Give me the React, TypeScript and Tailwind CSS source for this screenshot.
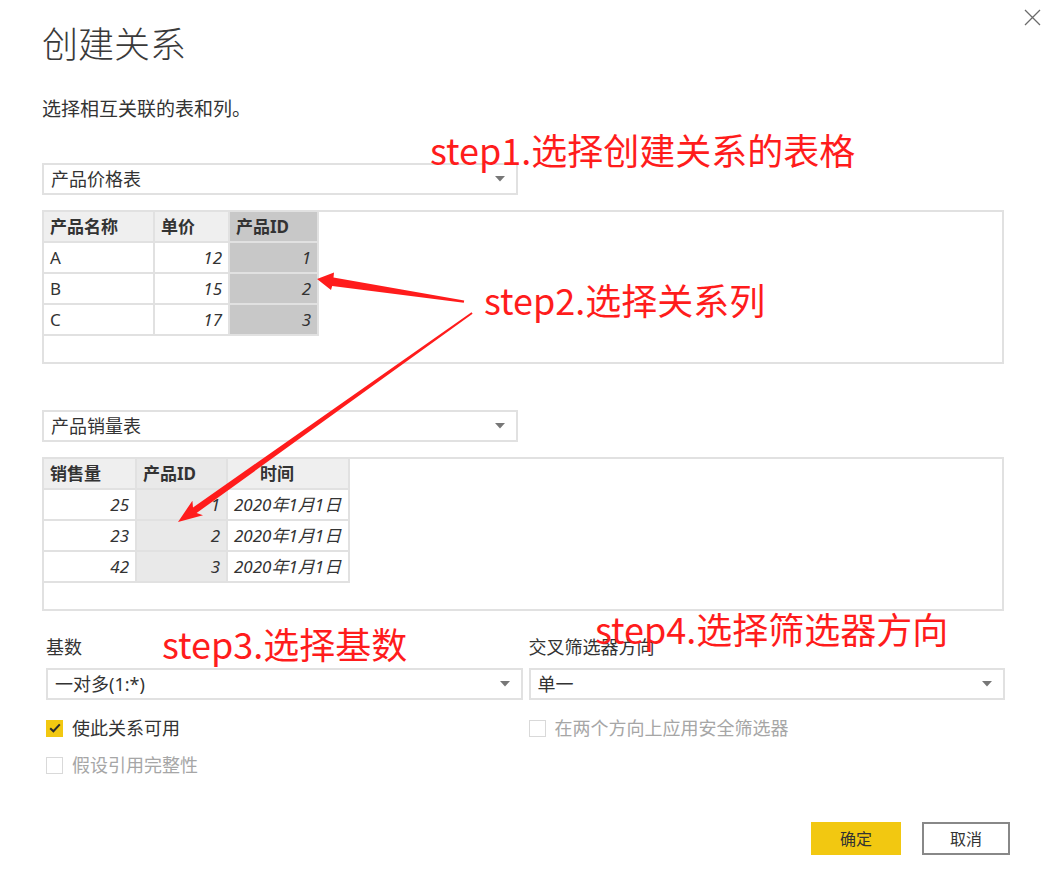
import React from 'react';

type Cell = { text: string; align?: 'left' | 'right'; italic?: boolean };

interface TableSpec {
  widths: number[];
  headers: string[];
  headerPad?: number[];
  selected: number;
  selectedBg: string;
  rows: Cell[][];
}

const priceTable: TableSpec = {
  widths: [111, 75, 89],
  headers: ['产品名称', '单价', '产品ID'],
  selected: 2,
  selectedBg: 'bg-[#c8c8c8]',
  rows: [
    [{ text: 'A' }, { text: '12', align: 'right', italic: true }, { text: '1', align: 'right', italic: true }],
    [{ text: 'B' }, { text: '15', align: 'right', italic: true }, { text: '2', align: 'right', italic: true }],
    [{ text: 'C' }, { text: '17', align: 'right', italic: true }, { text: '3', align: 'right', italic: true }],
  ],
};

const salesTable: TableSpec = {
  widths: [93, 91, 122],
  headers: ['销售量', '产品ID', '时间'],
  headerPad: [6, 6, 32],
  selected: 1,
  selectedBg: 'bg-[#e9e9e9]',
  rows: [
    [{ text: '25', align: 'right', italic: true }, { text: '1', align: 'right', italic: true }, { text: '2020年1月1日', italic: true }],
    [{ text: '23', align: 'right', italic: true }, { text: '2', align: 'right', italic: true }, { text: '2020年1月1日', italic: true }],
    [{ text: '42', align: 'right', italic: true }, { text: '3', align: 'right', italic: true }, { text: '2020年1月1日', italic: true }],
  ],
};

const Caret = () => (
  <svg width="10" height="6" viewBox="0 0 10 6" className="shrink-0">
    <path d="M0 0 L10 0 L5 5.5 Z" fill="#777" />
  </svg>
);

const Select = ({ value, className = '' }: { value: string; className?: string }) => (
  <div
    className={`h-[32px] border-2 border-[#e1e1e1] flex items-center justify-between pl-[7px] pr-[11px] text-[18px] leading-none ${className}`}
  >
    <span>{value}</span>
    <Caret />
  </div>
);

const DataTable = ({ spec }: { spec: TableSpec }) => (
  <div className="h-[154px] border-2 border-[#e1e1e1]">
    <div className="flex">
      {spec.headers.map((h, i) => (
        <div
          key={h}
          style={{ width: spec.widths[i], paddingLeft: spec.headerPad ? spec.headerPad[i] : 6 }}
          className={`h-[31px] flex items-center border-r-2 border-b-2 border-[#e1e1e1] text-[17px] font-bold ${
            i === spec.selected ? spec.selectedBg : 'bg-[#efefef]'
          }`}
        >
          {h}
        </div>
      ))}
    </div>
    {spec.rows.map((row, r) => (
      <div key={r} className="flex">
        {row.map((c, i) => (
          <div
            key={i}
            style={{ width: spec.widths[i] }}
            className={`h-[31px] flex items-center border-r-2 border-b-2 border-[#e1e1e1] text-[17px] px-[6px] ${
              c.align === 'right' ? 'justify-end' : 'justify-start'
            } ${c.italic ? 'italic' : ''} ${i === spec.selected ? spec.selectedBg : 'bg-white'}`}
          >
            {c.text}
          </div>
        ))}
      </div>
    ))}
  </div>
);

const Check = ({ checked, label, disabled }: { checked?: boolean; label: string; disabled?: boolean }) => (
  <div className="flex items-center gap-[9px] h-[24px]">
    {checked ? (
      <div className="w-[17px] h-[17px] bg-[#f2c811] flex items-center justify-center">
        <svg width="12" height="10" viewBox="0 0 12 10">
          <path d="M1.2 5.2 L4.4 8.3 L10.8 1.4" fill="none" stroke="#2b2b2b" strokeWidth="2" />
        </svg>
      </div>
    ) : (
      <div className="w-[17px] h-[17px] border border-[#d9d9d9] bg-white" />
    )}
    <span className={`text-[18px] leading-none ${disabled ? 'text-[#a6a6a6]' : ''}`}>{label}</span>
  </div>
);

export default function App() {
  return (
    <div className="relative w-[1052px] h-[896px] bg-white text-[#333] overflow-hidden font-['Noto_Sans','Noto_Sans_CJK_SC',sans-serif]">
      {/* close */}
      <button className="absolute right-[11px] top-[9px] w-[17px] h-[17px]">
        <svg width="17" height="17" viewBox="0 0 17 17">
          <path d="M1 1 L16 16 M16 1 L1 16" stroke="#6b6b6b" strokeWidth="1.3" />
        </svg>
      </button>

      <div className="pl-[42px] pr-[48px]">
        <h1 className="pt-[25px] text-[36px] leading-[40px] font-light text-[#3a3a3a]">创建关系</h1>
        <p className="mt-[32px] text-[19px] leading-[24px]">选择相互关联的表和列。</p>

        <Select value="产品价格表" className="mt-[42px] w-[476px]" />
        <div className="mt-[15px]">
          <DataTable spec={priceTable} />
        </div>

        <Select value="产品销量表" className="mt-[46px] w-[476px]" />
        <div className="mt-[15px]">
          <DataTable spec={salesTable} />
        </div>
      </div>

      <div className="pl-[46px] pr-[47px] grid grid-cols-2 gap-x-[6px] mt-[24px]">
        <div className="flex flex-col">
          <div className="text-[18px] leading-[24px]">基数</div>
          <Select value="一对多(1:*)" className="mt-[9px]" />
          <div className="mt-[16px]">
            <Check checked label="使此关系可用" />
          </div>
          <div className="mt-[13px]">
            <Check disabled label="假设引用完整性" />
          </div>
        </div>
        <div className="flex flex-col">
          <div className="text-[18px] leading-[24px]">交叉筛选器方向</div>
          <Select value="单一" className="mt-[9px]" />
          <div className="mt-[16px]">
            <Check disabled label="在两个方向上应用安全筛选器" />
          </div>
        </div>
      </div>

      <div className="flex justify-end gap-[21px] pr-[42px] mt-[45px]">
        <button className="w-[90px] h-[33px] bg-[#f2c811] text-[16px] text-[#333]">确定</button>
        <button className="w-[88px] h-[33px] border-2 border-[#888] bg-white text-[16px] text-[#333]">取消</button>
      </div>

      {/* annotations */}
      <div className="absolute left-[430px] top-[131px] text-[36px] leading-none text-[#ff1c1c] whitespace-nowrap font-['Noto_Sans_CJK_SC',sans-serif]">
        step1.选择创建关系的表格
      </div>
      <div className="absolute left-[484px] top-[281px] text-[36px] leading-none text-[#ff1c1c] whitespace-nowrap font-['Noto_Sans_CJK_SC',sans-serif]">
        step2.选择关系列
      </div>
      <div className="absolute left-[162px] top-[625px] text-[36px] leading-none text-[#ff1c1c] whitespace-nowrap font-['Noto_Sans_CJK_SC',sans-serif]">
        step3.选择基数
      </div>
      <div className="absolute left-[595px] top-[610px] text-[36px] leading-none text-[#ff1c1c] whitespace-nowrap font-['Noto_Sans_CJK_SC',sans-serif]">
        step4.选择筛选器方向
      </div>

      <svg className="absolute inset-0 pointer-events-none" width="1052" height="896" viewBox="0 0 1052 896">
        <polygon
          points="317,279 334,272.5 333.5,277.5 464.2,300.5 463.8,302.8 332.2,286 331,290"
          fill="#ff1c1c"
        />
        <polygon
          points="178,522 192.4,500.7 193,507.4 471.5,312.3 472.6,313.8 196.6,513 203,515.3"
          fill="#ff1c1c"
        />
      </svg>
    </div>
  );
}
